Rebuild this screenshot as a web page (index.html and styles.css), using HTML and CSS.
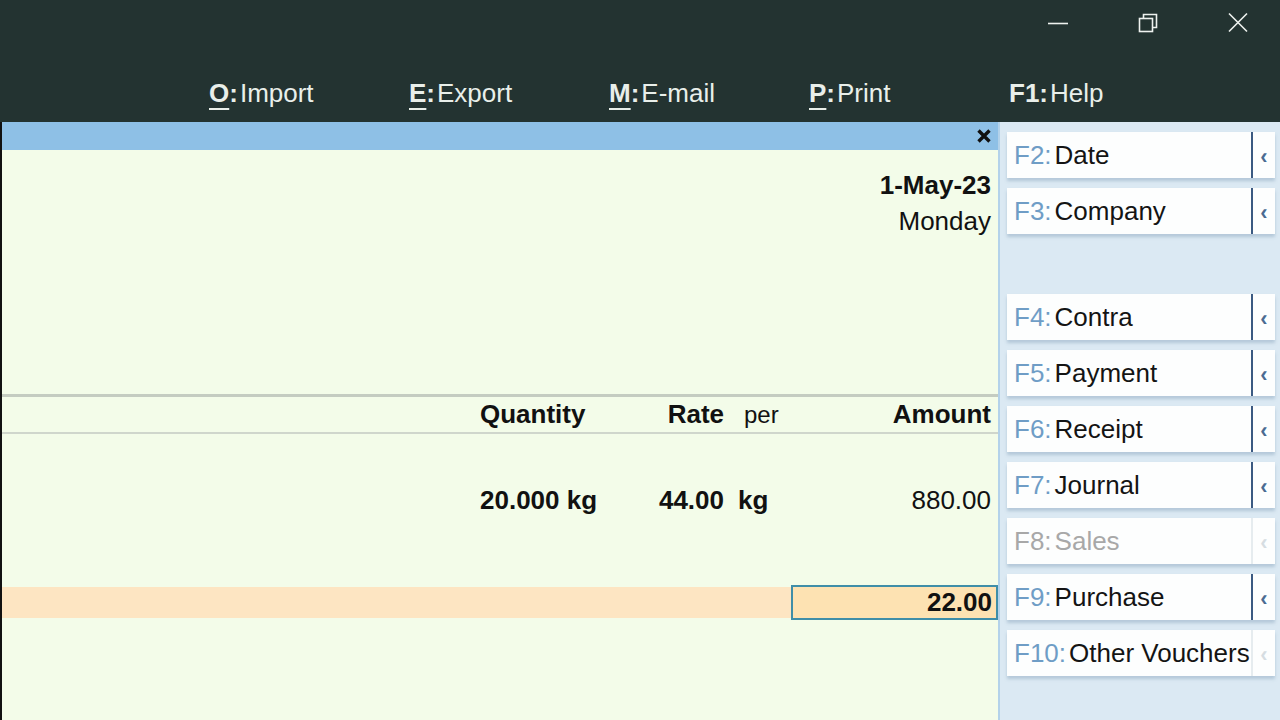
FILE: index.html
```html
<!DOCTYPE html>
<html lang="en">
<head>
  <meta charset="UTF-8" />
  <title>Accounting Voucher Creation</title>
  <link rel="stylesheet" href="styles.css">
</head>
<body>

  <div class="topbar">
    <div class="window-controls">
      <span class="wc">
        <svg width="24" height="24" viewBox="0 0 24 24"><path d="M2 12.5 H22" stroke="#eef2ef" stroke-width="1.6" fill="none"/></svg>
      </span>
      <span class="wc">
        <svg width="24" height="24" viewBox="0 0 24 24"><rect x="3.5" y="7.5" width="13" height="13" stroke="#eef2ef" stroke-width="1.6" fill="none"/><path d="M7.5 7.5 V3.5 H20.5 V16.5 H16.5" stroke="#eef2ef" stroke-width="1.6" fill="none"/></svg>
      </span>
      <span class="wc">
        <svg width="24" height="24" viewBox="0 0 24 24"><path d="M3 2.5 L21 20.5 M21 2.5 L3 20.5" stroke="#eef2ef" stroke-width="1.6" fill="none"/></svg>
      </span>
    </div>
    <div class="menu">
      <div class="menu-item"><span class="key"><u>O</u>:</span>Import</div>
      <div class="menu-item"><span class="key"><u>E</u>:</span>Export</div>
      <div class="menu-item"><span class="key"><u>M</u>:</span>E-mail</div>
      <div class="menu-item"><span class="key"><u>P</u>:</span>Print</div>
      <div class="menu-item"><span class="key">F1:</span>Help</div>
    </div>
  </div>

  <div class="workspace">
    <div class="voucher">
      <div class="voucher-strip">
        <svg class="close-x" width="16" height="16" viewBox="0 0 16 16"><path d="M2.5 2.5 L13.5 13.5 M13.5 2.5 L2.5 13.5" stroke="#111" stroke-width="3.4" fill="none"/></svg>
      </div>

      <div class="voucher-body">
        <div class="date-block">
          <div class="date">1-May-23</div>
          <div class="day">Monday</div>
        </div>

        <div class="items">
          <div class="row head">
            <span></span>
            <span class="col-qty">Quantity</span>
            <span class="col-rate">Rate</span>
            <span></span>
            <span class="col-per per-label">per</span>
            <span class="col-amt">Amount</span>
          </div>
          <div class="row item">
            <span></span>
            <span class="col-qty">20.000 kg</span>
            <span class="col-rate">44.00</span>
            <span></span>
            <span class="col-per">kg</span>
            <span class="col-amt amt-plain">880.00</span>
          </div>
        </div>

        <div class="entry-row">
          <div class="entry-fill"></div>
          <div class="entry-box">22.00</div>
        </div>
      </div>
    </div>

    <div class="sidebar">
      <div class="side-btn"><span class="fkey">F2:</span><span class="label">Date</span><span class="chev">&#8249;</span></div>
      <div class="side-btn"><span class="fkey">F3:</span><span class="label">Company</span><span class="chev">&#8249;</span></div>
      <div class="side-btn group-start"><span class="fkey">F4:</span><span class="label">Contra</span><span class="chev">&#8249;</span></div>
      <div class="side-btn"><span class="fkey">F5:</span><span class="label">Payment</span><span class="chev">&#8249;</span></div>
      <div class="side-btn"><span class="fkey">F6:</span><span class="label">Receipt</span><span class="chev">&#8249;</span></div>
      <div class="side-btn"><span class="fkey">F7:</span><span class="label">Journal</span><span class="chev">&#8249;</span></div>
      <div class="side-btn disabled"><span class="fkey">F8:</span><span class="label">Sales</span><span class="chev">&#8249;</span></div>
      <div class="side-btn"><span class="fkey">F9:</span><span class="label">Purchase</span><span class="chev">&#8249;</span></div>
      <div class="side-btn soft"><span class="fkey">F10:</span><span class="label">Other Vouchers</span><span class="chev">&#8249;</span></div>
    </div>
  </div>

</body>
</html>
```

FILE: styles.css
```css
body {
  margin: 0;
  font-family: 'Liberation Sans', Arial, sans-serif;
  width: 1280px;
  height: 720px;
  overflow: hidden;
  background: #dbe9f3;
}

/* top dark bar */
.topbar {
  background: #233331;
  height: 122px;
  color: #e9efea;
}

.window-controls {
  display: flex;
  justify-content: flex-end;
  height: 46px;
  align-items: center;
  padding-right: 30px;
}

.wc {
  width: 24px;
  height: 24px;
  margin-left: 66px;
  display: flex;
}

.menu {
  display: flex;
  padding: 29px 0 0 209px;
  height: 76px;
  align-items: flex-start;
  font-size: 26px;
  line-height: 36px;
  box-sizing: border-box;
}

.menu-item {
  width: 200px;
  flex: none;
}

.menu-item .key {
  font-weight: bold;
  margin-right: 2px;
}

.menu-item u {
  text-decoration-thickness: 2px;
  text-underline-offset: 6px;
}

/* main area */
.workspace {
  display: flex;
  height: 598px;
}

.voucher {
  width: 998px;
  flex: none;
  border-left: 2px solid #111;
  box-sizing: border-box;
  background: #f3fce9;
  display: flex;
  flex-direction: column;
}

.voucher-strip {
  height: 28px;
  background: #8ec0e6;
  display: flex;
  justify-content: flex-end;
  align-items: center;
  padding-right: 6px;
}

.voucher-body {
  font-size: 26px;
  color: #111;
}

.date-block {
  text-align: right;
  padding: 17px 7px 0 0;
  line-height: 36px;
}

.date {
  font-weight: bold;
}

.items {
  margin-top: 155px;
}

.row {
  display: grid;
  grid-template-columns: 478px 140px 104px 14px 62px 1fr;
  padding-right: 7px;
  align-items: center;
}

.row.head {
  height: 35px;
  border-top: 3px solid #c4ccc1;
  border-bottom: 2px solid #cfd6cc;
  font-weight: bold;
}

.row.item {
  height: 36px;
  margin-top: 48px;
  font-weight: bold;
}

.col-rate,
.col-amt {
  text-align: right;
}

.per-label {
  font-weight: normal;
  font-size: 24px;
  padding-left: 6px;
}

.amt-plain {
  font-weight: normal;
}

.entry-row {
  display: flex;
  align-items: center;
  margin-top: 67px;
}

.entry-fill {
  width: 789px;
  height: 31px;
  background: #fde5c2;
}

.entry-box {
  width: 207px;
  height: 35px;
  box-sizing: border-box;
  border: 2px solid #3f8ea8;
  background: #fde2b2;
  text-align: right;
  font-weight: bold;
  line-height: 31px;
  padding-right: 4px;
}

/* right button panel */
.sidebar {
  width: 282px;
  flex: none;
  border-left: 2px solid #b3d2ea;
  box-sizing: border-box;
  padding-top: 10px;
  background: #dbe9f3;
}

.side-btn {
  display: flex;
  align-items: center;
  width: 268px;
  height: 46px;
  margin: 0 0 10px 7px;
  background: #fdfefe;
  font-size: 26px;
  box-shadow: 0 3px 3px rgba(110, 140, 170, 0.35);
  padding-left: 7px;
  box-sizing: border-box;
}

.side-btn.group-start {
  margin-top: 60px;
}

.fkey {
  color: #6f9dc6;
  margin-right: 3px;
}

.label {
  color: #141414;
  flex: 1;
  white-space: nowrap;
}

.chev {
  width: 22px;
  height: 46px;
  border-left: 2px solid #3b5a82;
  color: #4b6b92;
  font-weight: bold;
  font-size: 22px;
  line-height: 50px;
  text-align: center;
  flex: none;
}

.side-btn.disabled .fkey,
.side-btn.disabled .label {
  color: #a8a8a8;
}

.side-btn.disabled .chev,
.side-btn.soft .chev {
  border-left-color: #e6ecef;
  color: #d6dde2;
}
```
